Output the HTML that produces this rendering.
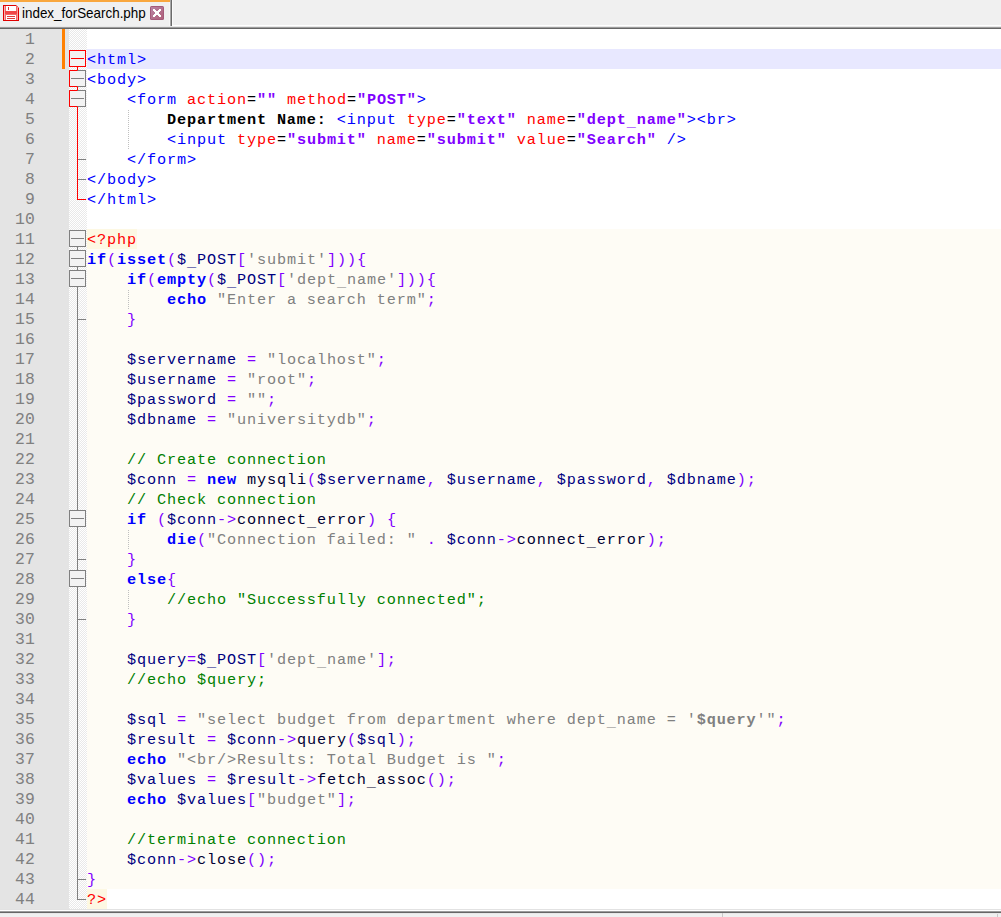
<!DOCTYPE html>
<html><head><meta charset="utf-8"><style>
*{margin:0;padding:0;box-sizing:border-box}
html,body{width:1001px;height:917px;overflow:hidden;background:#f0f0f0;position:relative}
.ab{position:absolute}
#tabbar{left:0;top:0;width:1001px;height:27px;background:#f0f0f0}
#tab{left:0;top:0;width:170px;height:27px;background:#f0f0f0}
#tabtop{left:0;top:0;width:170px;height:2px;background:#f9a73e}
#tabr{left:170px;top:0;width:2px;height:26px;background:linear-gradient(90deg,#a8a8a8 50%,#6a6a6a 50%)}
#tabline{left:0;top:26px;width:1001px;height:3px;background:linear-gradient(#e8e8e8 33.3%,#9c9c9c 33.3%,#9c9c9c 66.6%,#666 66.6%)}
#tabtitle{left:22px;top:5px;font:14.2px "Liberation Sans",sans-serif;letter-spacing:0px;transform:scaleX(0.945);transform-origin:0 0;color:#000;white-space:pre}
#close{left:150px;top:6px;width:14px;height:14px;background:#a8627c;border-radius:1px}
#lnm{left:0;top:29px;width:69px;height:880px;background:#e4e4e4}
#fold{left:69px;top:29px;width:18px;height:880px;background-color:#fff;background-image:repeating-conic-gradient(#e9e9e9 0 25%,#ffffff 0 50%);background-size:2px 2px}
#text{left:87px;top:29px;width:914px;height:880px;background:#fff}
.ln{position:absolute;left:0;width:35px;text-align:right;font:16.4px "Liberation Mono",monospace;letter-spacing:0.16px;color:#808080;height:20px;line-height:22px}
.row{position:absolute;left:87px;width:914px;height:20px}
.code{position:absolute;left:87px;height:20px;font:15.2px "Liberation Mono",monospace;letter-spacing:0.879px;line-height:22px;white-space:pre}
.t{color:#0000ff}.a{color:#ff0000}.s{color:#8000ff;font-weight:bold}.o{color:#000}.d{color:#000;font-weight:bold}
.q{color:#ff0000}.k{color:#0000ff;font-weight:bold}.v{color:#000080}.g{color:#808080}.gs{color:#808080;font-weight:bold}
.us{position:relative;top:2px}.p{color:#8000ff}.n{color:#000033}.c{color:#008000}
#bot1{left:0;top:909px;width:1001px;height:1px;background:#e2e2e2}
#bot2{left:0;top:910px;width:1001px;height:1px;background:#fff}
#bot3{left:0;top:911px;width:1001px;height:2px;background:linear-gradient(#9c9c9c 50%,#666 50%)}
#status{left:0;top:913px;width:1001px;height:4px;background:linear-gradient(#e8e8e8 25%,#f0f0f0 25%)}
#sdiv{left:722px;top:913px;width:1px;height:4px;background:#c8c8c8}
</style></head><body>

<div class="ab" id="tabbar"></div><div class="ab" id="tab"></div><div class="ab" id="tabtop"></div><div class="ab" id="tabr"></div>
<div class="ab" id="tabtitle">index_forSearch.php</div>
<svg class="ab" style="left:3px;top:5px" width="16" height="16" viewBox="0 0 16 16">
<path d="M0 0H13L16 3V16H0Z" fill="#e00000"/>
<rect x="1" y="1" width="14" height="14" fill="#f06a6a"/>
<rect x="1" y="1" width="1" height="14" fill="#f8b0b0"/>
<rect x="14" y="2" width="1" height="13" fill="#f8a0a0"/>
<rect x="3" y="1" width="10" height="5" fill="#ffffff"/>
<rect x="5" y="2" width="1" height="3" fill="#e43030"/>
<rect x="2" y="6" width="12" height="3" fill="#f04848"/>
<rect x="3" y="10" width="10" height="5" fill="#ffffff"/>
<rect x="4" y="11" width="8" height="1" fill="#e03c3c"/>
<rect x="4" y="13" width="8" height="1" fill="#e03c3c"/>
</svg><svg class="ab" style="left:150px;top:6px" width="14" height="14" viewBox="0 0 14 14">
<defs><linearGradient id="cg" x1="0" y1="0" x2="1" y2="1"><stop offset="0" stop-color="#b884a4"/><stop offset="1" stop-color="#b0607a"/></linearGradient></defs>
<rect x="0" y="0" width="14" height="14" rx="1.5" fill="#a45a7a"/>
<rect x="1" y="1" width="12" height="12" fill="url(#cg)"/>
<rect x="3" y="3" width="1" height="1" fill="#fff"/><rect x="4" y="3" width="1" height="1" fill="#fff"/><rect x="9" y="3" width="1" height="1" fill="#fff"/><rect x="10" y="3" width="1" height="1" fill="#fff"/><rect x="3" y="4" width="1" height="1" fill="#fff"/><rect x="4" y="4" width="1" height="1" fill="#fff"/><rect x="5" y="4" width="1" height="1" fill="#fff"/><rect x="8" y="4" width="1" height="1" fill="#fff"/><rect x="9" y="4" width="1" height="1" fill="#fff"/><rect x="10" y="4" width="1" height="1" fill="#fff"/><rect x="4" y="5" width="1" height="1" fill="#fff"/><rect x="5" y="5" width="1" height="1" fill="#fff"/><rect x="6" y="5" width="1" height="1" fill="#fff"/><rect x="7" y="5" width="1" height="1" fill="#fff"/><rect x="8" y="5" width="1" height="1" fill="#fff"/><rect x="9" y="5" width="1" height="1" fill="#fff"/><rect x="5" y="6" width="1" height="1" fill="#fff"/><rect x="6" y="6" width="1" height="1" fill="#fff"/><rect x="7" y="6" width="1" height="1" fill="#fff"/><rect x="8" y="6" width="1" height="1" fill="#fff"/><rect x="5" y="7" width="1" height="1" fill="#fff"/><rect x="6" y="7" width="1" height="1" fill="#fff"/><rect x="7" y="7" width="1" height="1" fill="#fff"/><rect x="8" y="7" width="1" height="1" fill="#fff"/><rect x="4" y="8" width="1" height="1" fill="#fff"/><rect x="5" y="8" width="1" height="1" fill="#fff"/><rect x="6" y="8" width="1" height="1" fill="#fff"/><rect x="7" y="8" width="1" height="1" fill="#fff"/><rect x="8" y="8" width="1" height="1" fill="#fff"/><rect x="9" y="8" width="1" height="1" fill="#fff"/><rect x="3" y="9" width="1" height="1" fill="#fff"/><rect x="4" y="9" width="1" height="1" fill="#fff"/><rect x="5" y="9" width="1" height="1" fill="#fff"/><rect x="8" y="9" width="1" height="1" fill="#fff"/><rect x="9" y="9" width="1" height="1" fill="#fff"/><rect x="10" y="9" width="1" height="1" fill="#fff"/><rect x="3" y="10" width="1" height="1" fill="#fff"/><rect x="4" y="10" width="1" height="1" fill="#fff"/><rect x="9" y="10" width="1" height="1" fill="#fff"/><rect x="10" y="10" width="1" height="1" fill="#fff"/></svg>
<div class="ab" style="left:172px;top:0;width:1px;height:26px;background:#fafafa"></div><div class="ab" style="left:169px;top:2px;width:1px;height:24px;background:#f6f6f6"></div><div class="ab" style="left:172px;top:25px;width:829px;height:1px;background:#fff"></div>
<div class="ab" id="tabline"></div>
<div class="ab" id="lnm"></div><div class="ab" id="fold"></div><div class="ab" id="text"></div>
<div class="row" style="top:49px;background:#e8e8ff"></div>
<div class="row" style="top:229px;background:#fefcf5"></div>
<div class="row" style="top:249px;background:#fefcf5"></div>
<div class="row" style="top:269px;background:#fefcf5"></div>
<div class="row" style="top:289px;background:#fefcf5"></div>
<div class="row" style="top:309px;background:#fefcf5"></div>
<div class="row" style="top:329px;background:#fefcf5"></div>
<div class="row" style="top:349px;background:#fefcf5"></div>
<div class="row" style="top:369px;background:#fefcf5"></div>
<div class="row" style="top:389px;background:#fefcf5"></div>
<div class="row" style="top:409px;background:#fefcf5"></div>
<div class="row" style="top:429px;background:#fefcf5"></div>
<div class="row" style="top:449px;background:#fefcf5"></div>
<div class="row" style="top:469px;background:#fefcf5"></div>
<div class="row" style="top:489px;background:#fefcf5"></div>
<div class="row" style="top:509px;background:#fefcf5"></div>
<div class="row" style="top:529px;background:#fefcf5"></div>
<div class="row" style="top:549px;background:#fefcf5"></div>
<div class="row" style="top:569px;background:#fefcf5"></div>
<div class="row" style="top:589px;background:#fefcf5"></div>
<div class="row" style="top:609px;background:#fefcf5"></div>
<div class="row" style="top:629px;background:#fefcf5"></div>
<div class="row" style="top:649px;background:#fefcf5"></div>
<div class="row" style="top:669px;background:#fefcf5"></div>
<div class="row" style="top:689px;background:#fefcf5"></div>
<div class="row" style="top:709px;background:#fefcf5"></div>
<div class="row" style="top:729px;background:#fefcf5"></div>
<div class="row" style="top:749px;background:#fefcf5"></div>
<div class="row" style="top:769px;background:#fefcf5"></div>
<div class="row" style="top:789px;background:#fefcf5"></div>
<div class="row" style="top:809px;background:#fefcf5"></div>
<div class="row" style="top:829px;background:#fefcf5"></div>
<div class="row" style="top:849px;background:#fefcf5"></div>
<div class="row" style="top:869px;background:#fefcf5"></div>
<div class="row" style="top:229px;width:50px;background:#fdf8e3"></div>
<div class="row" style="top:889px;width:20px;background:#fdf8e3"></div>
<div class="ln" style="top:29px">1</div>
<div class="ln" style="top:49px">2</div>
<div class="code" style="top:49px"><span class="t">&lt;html&gt;</span></div>
<div class="ln" style="top:69px">3</div>
<div class="code" style="top:69px"><span class="t">&lt;body&gt;</span></div>
<div class="ln" style="top:89px">4</div>
<div class="code" style="top:89px"><span class="o">    </span><span class="t">&lt;form</span><span class="o"> </span><span class="a">action</span><span class="o">=</span><span class="s">&quot;&quot;</span><span class="o"> </span><span class="a">method</span><span class="o">=</span><span class="s">&quot;POST&quot;</span><span class="t">&gt;</span></div>
<div class="ln" style="top:109px">5</div>
<div class="code" style="top:109px"><span class="o">        </span><span class="d">Department Name: </span><span class="t">&lt;input</span><span class="o"> </span><span class="a">type</span><span class="o">=</span><span class="s">&quot;text&quot;</span><span class="o"> </span><span class="a">name</span><span class="o">=</span><span class="s">&quot;dept<span class="us">_</span>name&quot;</span><span class="t">&gt;&lt;br&gt;</span></div>
<div class="ln" style="top:129px">6</div>
<div class="code" style="top:129px"><span class="o">        </span><span class="t">&lt;input</span><span class="o"> </span><span class="a">type</span><span class="o">=</span><span class="s">&quot;submit&quot;</span><span class="o"> </span><span class="a">name</span><span class="o">=</span><span class="s">&quot;submit&quot;</span><span class="o"> </span><span class="a">value</span><span class="o">=</span><span class="s">&quot;Search&quot;</span><span class="o"> </span><span class="t">/&gt;</span></div>
<div class="ln" style="top:149px">7</div>
<div class="code" style="top:149px"><span class="o">    </span><span class="t">&lt;/form&gt;</span></div>
<div class="ln" style="top:169px">8</div>
<div class="code" style="top:169px"><span class="t">&lt;/body&gt;</span></div>
<div class="ln" style="top:189px">9</div>
<div class="code" style="top:189px"><span class="t">&lt;/html&gt;</span></div>
<div class="ln" style="top:209px">10</div>
<div class="ln" style="top:229px">11</div>
<div class="code" style="top:229px"><span class="q">&lt;?php</span></div>
<div class="ln" style="top:249px">12</div>
<div class="code" style="top:249px"><span class="k">if</span><span class="p">(</span><span class="k">isset</span><span class="p">(</span><span class="v">$<span class="us">_</span>POST</span><span class="p">[</span><span class="g">&#x27;submit&#x27;</span><span class="p">])){</span></div>
<div class="ln" style="top:269px">13</div>
<div class="code" style="top:269px"><span class="n">    </span><span class="k">if</span><span class="p">(</span><span class="k">empty</span><span class="p">(</span><span class="v">$<span class="us">_</span>POST</span><span class="p">[</span><span class="g">&#x27;dept<span class="us">_</span>name&#x27;</span><span class="p">])){</span></div>
<div class="ln" style="top:289px">14</div>
<div class="code" style="top:289px"><span class="n">        </span><span class="k">echo</span><span class="n"> </span><span class="g">&quot;Enter a search term&quot;</span><span class="p">;</span></div>
<div class="ln" style="top:309px">15</div>
<div class="code" style="top:309px"><span class="n">    </span><span class="p">}</span></div>
<div class="ln" style="top:329px">16</div>
<div class="ln" style="top:349px">17</div>
<div class="code" style="top:349px"><span class="n">    </span><span class="v">$servername</span><span class="n"> </span><span class="p">=</span><span class="n"> </span><span class="g">&quot;localhost&quot;</span><span class="p">;</span></div>
<div class="ln" style="top:369px">18</div>
<div class="code" style="top:369px"><span class="n">    </span><span class="v">$username</span><span class="n"> </span><span class="p">=</span><span class="n"> </span><span class="g">&quot;root&quot;</span><span class="p">;</span></div>
<div class="ln" style="top:389px">19</div>
<div class="code" style="top:389px"><span class="n">    </span><span class="v">$password</span><span class="n"> </span><span class="p">=</span><span class="n"> </span><span class="g">&quot;&quot;</span><span class="p">;</span></div>
<div class="ln" style="top:409px">20</div>
<div class="code" style="top:409px"><span class="n">    </span><span class="v">$dbname</span><span class="n"> </span><span class="p">=</span><span class="n"> </span><span class="g">&quot;universitydb&quot;</span><span class="p">;</span></div>
<div class="ln" style="top:429px">21</div>
<div class="ln" style="top:449px">22</div>
<div class="code" style="top:449px"><span class="n">    </span><span class="c">// Create connection</span></div>
<div class="ln" style="top:469px">23</div>
<div class="code" style="top:469px"><span class="n">    </span><span class="v">$conn</span><span class="n"> </span><span class="p">=</span><span class="n"> </span><span class="k">new</span><span class="n"> mysqli</span><span class="p">(</span><span class="v">$servername</span><span class="p">,</span><span class="n"> </span><span class="v">$username</span><span class="p">,</span><span class="n"> </span><span class="v">$password</span><span class="p">,</span><span class="n"> </span><span class="v">$dbname</span><span class="p">);</span></div>
<div class="ln" style="top:489px">24</div>
<div class="code" style="top:489px"><span class="n">    </span><span class="c">// Check connection</span></div>
<div class="ln" style="top:509px">25</div>
<div class="code" style="top:509px"><span class="n">    </span><span class="k">if</span><span class="n"> </span><span class="p">(</span><span class="v">$conn</span><span class="p">-&gt;</span><span class="n">connect<span class="us">_</span>error</span><span class="p">)</span><span class="n"> </span><span class="p">{</span></div>
<div class="ln" style="top:529px">26</div>
<div class="code" style="top:529px"><span class="n">        </span><span class="k">die</span><span class="p">(</span><span class="g">&quot;Connection failed: &quot;</span><span class="n"> </span><span class="p">.</span><span class="n"> </span><span class="v">$conn</span><span class="p">-&gt;</span><span class="n">connect<span class="us">_</span>error</span><span class="p">);</span></div>
<div class="ln" style="top:549px">27</div>
<div class="code" style="top:549px"><span class="n">    </span><span class="p">}</span></div>
<div class="ln" style="top:569px">28</div>
<div class="code" style="top:569px"><span class="n">    </span><span class="k">else</span><span class="p">{</span></div>
<div class="ln" style="top:589px">29</div>
<div class="code" style="top:589px"><span class="n">        </span><span class="c">//echo &quot;Successfully connected&quot;;</span></div>
<div class="ln" style="top:609px">30</div>
<div class="code" style="top:609px"><span class="n">    </span><span class="p">}</span></div>
<div class="ln" style="top:629px">31</div>
<div class="ln" style="top:649px">32</div>
<div class="code" style="top:649px"><span class="n">    </span><span class="v">$query</span><span class="p">=</span><span class="v">$<span class="us">_</span>POST</span><span class="p">[</span><span class="g">&#x27;dept<span class="us">_</span>name&#x27;</span><span class="p">];</span></div>
<div class="ln" style="top:669px">33</div>
<div class="code" style="top:669px"><span class="n">    </span><span class="c">//echo $query;</span></div>
<div class="ln" style="top:689px">34</div>
<div class="ln" style="top:709px">35</div>
<div class="code" style="top:709px"><span class="n">    </span><span class="v">$sql</span><span class="n"> </span><span class="p">=</span><span class="n"> </span><span class="g">&quot;select budget from department where dept<span class="us">_</span>name = &#x27;</span><span class="gs">$query</span><span class="g">&#x27;&quot;</span><span class="p">;</span></div>
<div class="ln" style="top:729px">36</div>
<div class="code" style="top:729px"><span class="n">    </span><span class="v">$result</span><span class="n"> </span><span class="p">=</span><span class="n"> </span><span class="v">$conn</span><span class="p">-&gt;</span><span class="n">query</span><span class="p">(</span><span class="v">$sql</span><span class="p">);</span></div>
<div class="ln" style="top:749px">37</div>
<div class="code" style="top:749px"><span class="n">    </span><span class="k">echo</span><span class="n"> </span><span class="g">&quot;&lt;br/&gt;Results: Total Budget is &quot;</span><span class="p">;</span></div>
<div class="ln" style="top:769px">38</div>
<div class="code" style="top:769px"><span class="n">    </span><span class="v">$values</span><span class="n"> </span><span class="p">=</span><span class="n"> </span><span class="v">$result</span><span class="p">-&gt;</span><span class="n">fetch<span class="us">_</span>assoc</span><span class="p">();</span></div>
<div class="ln" style="top:789px">39</div>
<div class="code" style="top:789px"><span class="n">    </span><span class="k">echo</span><span class="n"> </span><span class="v">$values</span><span class="p">[</span><span class="g">&quot;budget&quot;</span><span class="p">];</span></div>
<div class="ln" style="top:809px">40</div>
<div class="ln" style="top:829px">41</div>
<div class="code" style="top:829px"><span class="n">    </span><span class="c">//terminate connection</span></div>
<div class="ln" style="top:849px">42</div>
<div class="code" style="top:849px"><span class="n">    </span><span class="v">$conn</span><span class="p">-&gt;</span><span class="n">close</span><span class="p">();</span></div>
<div class="ln" style="top:869px">43</div>
<div class="code" style="top:869px"><span class="p">}</span></div>
<div class="ln" style="top:889px">44</div>
<div class="code" style="top:889px"><span class="q">?&gt;</span></div>
<div class="ab" style="left:62px;top:29px;width:3px;height:40px;background:#ff8000"></div>
<div class="ab" style="left:128px;top:110px;width:1px;height:40px;background-image:linear-gradient(#c0c0c0 50%,transparent 50%);background-size:1px 2px"></div>
<div class="ab" style="left:128px;top:290px;width:1px;height:20px;background-image:linear-gradient(#c0c0c0 50%,transparent 50%);background-size:1px 2px"></div>
<div class="ab" style="left:128px;top:530px;width:1px;height:20px;background-image:linear-gradient(#c0c0c0 50%,transparent 50%);background-size:1px 2px"></div>
<div class="ab" style="left:128px;top:590px;width:1px;height:20px;background-image:linear-gradient(#c0c0c0 50%,transparent 50%);background-size:1px 2px"></div>
<svg class="ab" style="left:0;top:0" width="1001" height="917" viewBox="0 0 1001 917"><rect x="69.5" y="50.5" width="16" height="16" fill="#f3f3f3" stroke="#808080" stroke-width="1"/><rect x="69.5" y="50.5" width="16" height="16" fill="none" stroke="#ff0000" stroke-width="1"/><line x1="71" y1="58.5" x2="84" y2="58.5" stroke="#ff0000" stroke-width="1"/><rect x="77" y="67" width="1" height="3" fill="#ff0000"/><rect x="69.5" y="70.5" width="16" height="16" fill="#f3f3f3" stroke="#808080" stroke-width="1"/><path d="M77.5 70.5 H69.5 V86.5 H77.5" fill="none" stroke="#ff0000" stroke-width="1"/><line x1="71" y1="78.5" x2="84" y2="78.5" stroke="#808080" stroke-width="1"/><rect x="77" y="87" width="1" height="3" fill="#ff0000"/><rect x="69.5" y="90.5" width="16" height="16" fill="#f3f3f3" stroke="#808080" stroke-width="1"/><path d="M77.5 90.5 H69.5 V106.5 H77.5" fill="none" stroke="#ff0000" stroke-width="1"/><line x1="71" y1="98.5" x2="84" y2="98.5" stroke="#808080" stroke-width="1"/><rect x="77" y="107" width="1" height="93" fill="#ff0000"/><rect x="78" y="159" width="8" height="1" fill="#808080"/><rect x="78" y="179" width="8" height="1" fill="#808080"/><rect x="78" y="199" width="8" height="1" fill="#ff0000"/><rect x="69.5" y="230.5" width="16" height="16" fill="#f3f3f3" stroke="#808080" stroke-width="1"/><line x1="71" y1="238.5" x2="84" y2="238.5" stroke="#808080" stroke-width="1"/><rect x="77" y="247" width="1" height="3" fill="#808080"/><rect x="69.5" y="250.5" width="16" height="16" fill="#f3f3f3" stroke="#808080" stroke-width="1"/><line x1="71" y1="258.5" x2="84" y2="258.5" stroke="#808080" stroke-width="1"/><rect x="77" y="267" width="1" height="3" fill="#808080"/><rect x="69.5" y="270.5" width="16" height="16" fill="#f3f3f3" stroke="#808080" stroke-width="1"/><line x1="71" y1="278.5" x2="84" y2="278.5" stroke="#808080" stroke-width="1"/><rect x="77" y="287" width="1" height="223" fill="#808080"/><rect x="78" y="319" width="8" height="1" fill="#808080"/><rect x="69.5" y="510.5" width="16" height="16" fill="#f3f3f3" stroke="#808080" stroke-width="1"/><line x1="71" y1="518.5" x2="84" y2="518.5" stroke="#808080" stroke-width="1"/><rect x="77" y="527" width="1" height="43" fill="#808080"/><rect x="78" y="559" width="8" height="1" fill="#808080"/><rect x="69.5" y="570.5" width="16" height="16" fill="#f3f3f3" stroke="#808080" stroke-width="1"/><line x1="71" y1="578.5" x2="84" y2="578.5" stroke="#808080" stroke-width="1"/><rect x="77" y="587" width="1" height="313" fill="#808080"/><rect x="78" y="619" width="8" height="1" fill="#808080"/><rect x="78" y="879" width="8" height="1" fill="#808080"/><rect x="78" y="899" width="8" height="1" fill="#808080"/></svg>
<div class="ab" id="bot1"></div><div class="ab" id="bot2"></div><div class="ab" id="bot3"></div><div class="ab" id="status"></div><div class="ab" id="sdiv"></div><div class="ab" style="left:997px;top:914px;width:1px;height:3px;background:#c8c8c8"></div>
</body></html>
